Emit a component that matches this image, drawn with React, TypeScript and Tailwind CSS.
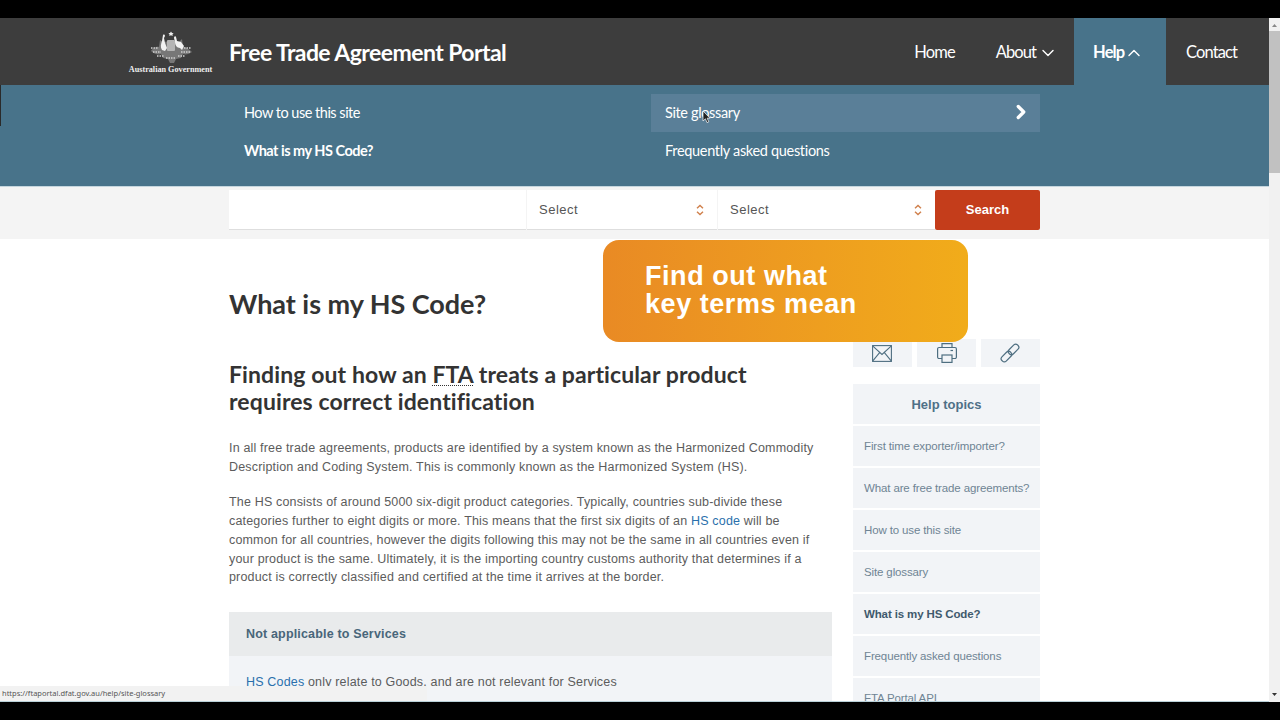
import { ChevronDown, ChevronRight, ChevronUp } from 'lucide-react'

const helpTopics = [
  { label: 'First time exporter/importer?' },
  { label: 'What are free trade agreements?' },
  { label: 'How to use this site' },
  { label: 'Site glossary' },
  { label: 'What is my HS Code?', active: true },
  { label: 'Frequently asked questions' },
  { label: 'FTA Portal API' },
]

const headingFont = "font-['Lato','Noto_Sans',sans-serif]"
const bodyFont = "font-['Liberation_Sans',Arial,sans-serif]"

function Crest() {
  return (
    <svg width="44" height="32" viewBox="0 0 44 32" fill="none">
      <path d="M2 20c2-3 5-5 8-4l1-7 3 2 8-1 8 1 3-3 1 8c3 0 6 2 9 5-3 2-6 3-9 2l-2 4-5 1-2 4h-4l-2-4-5-1-2-4c-3 1-7 0-10-3z" fill="#777" />
      <path d="M13 19c-2-3-1-6 0-9l1-6c1-1 2 0 2 1l-1 2 1 5 2 5-2 3zM31 17c-3 0-5-3-5-6l-1-4c0-2 2-2 2-1l1 4 4 1 3 4-2 4z" fill="#f2f2f2" />
      <rect x="18" y="9" width="8" height="11" rx="1" fill="#b5b5b5" />
      <path d="M22 0.5l1 1.5 1.6.2-1.2 1.2.3 1.6-1.7-.8-1.7.8.3-1.6-1.2-1.2 1.6-.2z" fill="#eee" />
      <path d="M2 17h7M35 17h7M4 21h8M32 21h9M8 25h7M29 25h7M17 27h10" stroke="#cfcfcf" strokeWidth="1.3" strokeDasharray="1.5 1" />
    </svg>
  )
}

function SortCarets() {
  return (
    <svg width="8" height="12" viewBox="0 0 8 12" fill="none" stroke="#d0804c" strokeWidth="1.4">
      <path d="M1 4.2 4 1.4l3 2.8M1 7.8l3 2.8 3-2.8" />
    </svg>
  )
}

function SelectBox({ width }: { width: string }) {
  return (
    <div className={`flex items-center justify-between bg-white border-b border-[#dedede] pl-[12px] pr-[13px] text-[13px] tracking-[0.5px] text-[#555] ${width}`}>
      <span>Select</span>
      <SortCarets />
    </div>
  )
}

function MailIcon() {
  return (
    <svg className="-ml-[1px]" width="20" height="17" viewBox="0 0 20 17" fill="none" stroke="#4e6e80" strokeWidth="1.1">
      <rect x="0.6" y="0.6" width="18.8" height="15.8" />
      <path d="M0.6 0.8 10 9.5l9.4-8.7M0.6 16.2l7-8.6M19.4 16.2l-7-8.6" />
    </svg>
  )
}

function PrintIcon() {
  return (
    <svg width="20" height="20" viewBox="0 0 20 20" fill="none" stroke="#4e6e80" strokeWidth="1.2">
      <path d="M5 4.5V0.6h10v3.9M5 15.5H2a1.4 1.4 0 0 1-1.4-1.4V5.9A1.4 1.4 0 0 1 2 4.5h16a1.4 1.4 0 0 1 1.4 1.4v8.2a1.4 1.4 0 0 1-1.4 1.4h-3" />
      <rect x="5" y="12" width="10" height="7.4" />
      <path d="M13.5 7.5h2.5" />
    </svg>
  )
}

function LinkIcon() {
  return (
    <svg className="-ml-[1px]" width="20" height="20" viewBox="0 0 20 20" fill="none" stroke="#4e6e80" strokeWidth="1.2">
      <g transform="rotate(-45 10 10)">
        <rect x="-1" y="7" width="12" height="6" rx="2.6" />
        <rect x="9" y="7" width="12" height="6" rx="2.6" />
      </g>
    </svg>
  )
}

export default function App() {
  return (
    <div className="h-screen overflow-hidden bg-black flex flex-col">
      <div className="h-[18px] shrink-0 bg-black" />

      <div className="h-[684px] shrink-0 flex">
        {/* page */}
        <div className={`relative w-[1269px] h-full overflow-hidden bg-white border-b border-[#b9d0d8] ${bodyFont}`}>
          <header className={`h-[67px] bg-[#3d3d3d] flex text-white ${headingFont}`}>
            <div className="w-[229px] shrink-0 flex flex-col items-center pl-[112px] pt-[13px]">
              <Crest />
              <span className="font-['Liberation_Serif',serif] font-bold text-[8.2px] leading-[10px] whitespace-nowrap text-[#eee] mt-[2px]">Australian Government</span>
            </div>
            <div className="flex-1 flex items-center pt-[2px] text-[23px] font-bold tracking-[-0.56px]">Free Trade Agreement Portal</div>
            <nav className="flex text-[16.5px] tracking-[-0.9px]">
              <a className="flex items-center pt-[2px] pr-[41px]">Home</a>
              <a className="flex items-center pt-[2px] pr-[16px]">
                About <ChevronDown size={20} strokeWidth={1.7} className="ml-[2px]" />
              </a>
              <a className="flex items-center pt-[2px] w-[92px] pl-[19px] bg-[#48738a] font-bold">
                Help <ChevronUp size={20} strokeWidth={1.7} />
              </a>
              <a className="flex items-center pt-[2px] pl-[20px] pr-[32px]">Contact</a>
            </nav>
          </header>

          <div className={`relative h-[102px] bg-[#48738a] border-b border-[#c5d6de] pt-[9px] pl-[229px] text-white text-[14.5px] ${headingFont}`}>
            <div className="absolute left-0 top-0 w-px h-[41px] bg-[#2a2a2a]" />
            <div className="w-[811px] grid grid-cols-[408px_389px] gap-x-[14px]">
              <a className="h-[38px] flex items-center pl-[15px] tracking-[-0.5px]">How to use this site</a>
              <a className="h-[38px] flex items-center justify-between pl-[14px] pr-[8px] bg-[#5a7f98] tracking-[-0.36px]">
                Site glossary <ChevronRight size={22} strokeWidth={3.6} className="-mt-[2px]" />
              </a>
              <a className="h-[38px] flex items-center pl-[15px] font-bold tracking-[-0.5px]">What is my HS Code?</a>
              <a className="h-[38px] flex items-center pl-[14px] tracking-[-0.32px]">Frequently asked questions</a>
            </div>
          </div>

          <div className="h-[52px] bg-[#f4f4f4] pt-[3px] pl-[229px]">
            <div className="w-[811px] h-[40px] flex">
              <div className="w-[297px] bg-white border-b border-[#dedede] mr-px" />
              <SelectBox width="w-[190px] mr-px" />
              <SelectBox width="w-[217px]" />
              <button className="w-[105px] bg-[#c43d1b] rounded-[2px] text-white text-[13px] font-bold">Search</button>
            </div>
          </div>

          <main className="ml-[229px] w-[811px] flex gap-[21px]">
            <div className="w-[603px] shrink-0 text-[#5c5c5c] text-[12.5px] leading-[18.7px] tracking-[0.17px]">
              <h1 className={`mt-[47px] text-[27px] leading-[36px] tracking-[-0.04px] font-bold text-[#333] ${headingFont}`}>What is my HS Code?</h1>
              <h2 className={`mt-[39px] text-[23px] leading-[27px] tracking-[0.1px] font-bold text-[#333] ${headingFont}`}>
                Finding out how an <abbr className="underline decoration-dotted decoration-1 underline-offset-2">FTA</abbr> treats a particular product<br />requires correct identification
              </h2>
              <p className="mt-[24px]">
                In all free trade agreements, products are identified by a system known as the Harmonized Commodity Description and Coding System. This is commonly known as the Harmonized System (HS).
              </p>
              <p className="mt-[17px]">
                The HS consists of around 5000 six-digit product categories. Typically, countries sub-divide these categories further to eight digits or more. This means that the first six digits of an <a className="text-[#2a70ac]">HS code</a> will be common for all countries, however the digits following this may not be the same in all countries even if your product is the same. Ultimately, it is the importing country customs authority that determines if a product is correctly classified and certified at the time it arrives at the border.
              </p>
              <div className="mt-[25px]">
                <div className="h-[44px] bg-[#e9ebec] flex items-center pl-[17px] text-[#48667a] font-bold">Not applicable to Services</div>
                <div className="h-[60px] bg-[#f2f4f7] pl-[17px] pt-[17px]">
                  <a className="text-[#2a70ac]">HS Codes</a> only relate to Goods, and are not relevant for Services
                </div>
              </div>
            </div>

            <aside className="w-[187px] shrink-0 pt-[100px] text-[11.5px] tracking-[-0.13px]">
              <div className="flex gap-[5px]">
                <div className="flex-1 h-[28px] bg-[#f2f4f7] flex items-center justify-center"><MailIcon /></div>
                <div className="flex-1 h-[28px] bg-[#f2f4f7] flex items-center justify-center"><PrintIcon /></div>
                <div className="flex-1 h-[28px] bg-[#f2f4f7] flex items-center justify-center"><LinkIcon /></div>
              </div>
              <div className="mt-[17px] h-[40px] bg-[#f2f4f7] flex items-center justify-center pt-px text-[13px] tracking-normal font-bold text-[#4f7087]">Help topics</div>
              <ul className="mt-[2px] flex flex-col gap-[2px]">
                {helpTopics.map((topic) => (
                  <li
                    key={topic.label}
                    className={`h-[40px] bg-[#f2f4f7] flex items-center pt-px pl-[11px] whitespace-nowrap ${topic.active ? 'font-bold text-[#3f5a6d]' : 'text-[#6f8494]'}`}
                  >
                    {topic.label}
                  </li>
                ))}
              </ul>
            </aside>
          </main>

          {/* video callout over the page */}
          <div className="absolute left-[603px] top-[222px] w-[365px] h-[102px] rounded-[16px] bg-gradient-to-r from-[#e98a24] to-[#f1ac1a] pl-[42px] pt-[22px] text-white font-bold text-[27px] leading-[28px] tracking-[0.55px]">
            Find out what<br />key terms mean
          </div>

          {/* browser status bubble */}
          <div className="absolute left-0 bottom-0 w-[427px] h-[15px] bg-[#f2f2f2] pl-[2px] text-[7.5px] leading-[15px] text-[#555] font-['Noto_Sans',sans-serif]">
            https://ftaportal.dfat.gov.au/help/site-glossary
          </div>

          {/* mouse pointer */}
          <svg className="absolute left-[702px] top-[92px]" width="9" height="14" viewBox="0 0 9 14">
            <path d="M1 1v10l2.4-2.2L5 12.6l1.8-.8-1.6-3.6H8z" fill="#222" stroke="#fff" strokeWidth="0.7" />
          </svg>
        </div>

        {/* scrollbar */}
        <div className="w-[11px] h-full bg-[#f1f1f1] flex flex-col items-center">
          <svg className="mt-[5px]" width="7" height="5" viewBox="0 0 7 5"><path d="M3.5 1 6 4H1z" fill="#888" /></svg>
          <div className="mt-[3px] w-full h-[142px] bg-[#c1c1c1]" />
          <div className="flex-1" />
          <svg className="mb-[5px]" width="7" height="5" viewBox="0 0 7 5"><path d="M3.5 4 1 1h5z" fill="#333" /></svg>
        </div>
      </div>

      <div className="flex-1 bg-black" />
    </div>
  )
}
